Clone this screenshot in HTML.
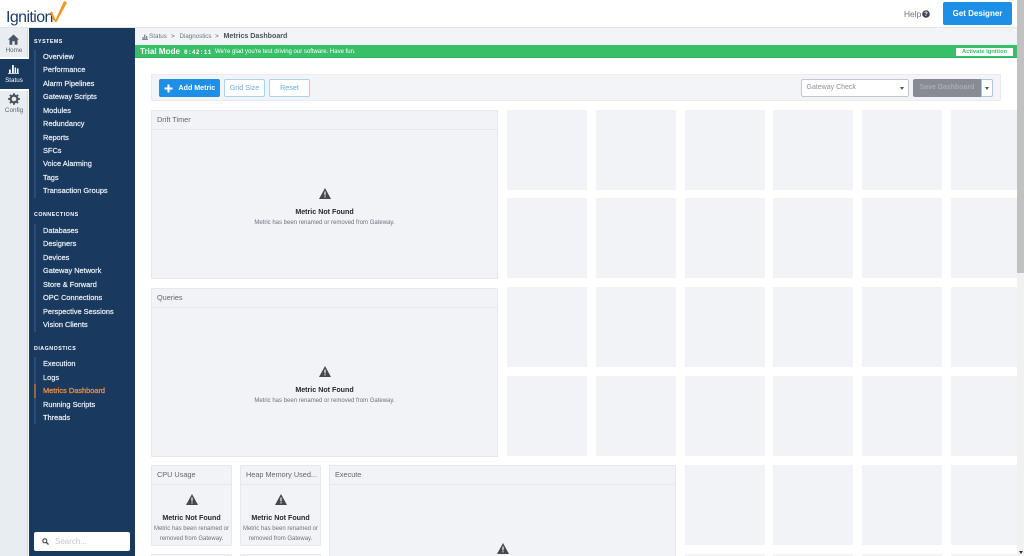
<!DOCTYPE html>
<html><head><meta charset="utf-8"><title>Metrics Dashboard</title>
<style>
html,body{margin:0;padding:0;width:1024px;height:556px;overflow:hidden;background:#fff;font-family:"Liberation Sans",sans-serif}
#w{position:relative;width:1024px;height:556px;overflow:hidden;background:#fff}
.a{position:absolute;white-space:nowrap}
.nav{position:absolute;left:43px;color:#eef2f6;font-size:7.4px;-webkit-text-stroke:.2px #eef2f6;line-height:10px;white-space:nowrap}
.sec{position:absolute;left:34px;color:#fff;font-size:5.3px;font-weight:bold;letter-spacing:.5px;line-height:8px}
.bar{position:absolute;left:34px;width:2px;background:#2c4c74}
.c{position:absolute;width:80px;height:80px;background:#f2f3f7;overflow:hidden}
.p{position:absolute;background:#f2f3f7;border:1px solid #e6e8ee;box-sizing:border-box;overflow:hidden;border-radius:1px}
.p .h{height:18px;border-bottom:1px solid #e6e8ee;color:#5f6672;font-size:7.3px;line-height:18px;padding-left:5px;white-space:nowrap}
.b{position:absolute;left:0;right:0;text-align:center}
.b svg{display:block;margin:0 auto}
.b b{display:block;color:#24272e;font-size:7.1px;line-height:9px;margin-top:9px}
.b span{display:block;color:#6d727c;font-size:6px;line-height:10px;margin-top:1px}
.btn{position:absolute;top:79px;height:18px;box-sizing:border-box;border-radius:2px;font-size:7.2px;line-height:16px;text-align:center;border:1px solid #a9d3f2;color:#6aaee0;background:#fff}
</style></head><body><div id="w">

<!-- header -->
<div class="a" style="left:0;top:0;width:1017px;height:28px;background:#fff;border-bottom:1px solid #e3e7ec;box-sizing:border-box"></div>
<div class="a" style="left:6px;top:7.500px;font-size:16px;line-height:20px;color:#1d3d66;letter-spacing:-.6px">Ignition</div>
<svg class="a" style="left:48px;top:0" width="20" height="24" viewBox="0 0 20 24"><path d="M2 12.500L4 11.500 7.500 20 6 21.500Z" fill="#f7941d"/><path d="M6.500 22L16 1 19 2.500 8.500 22Z" fill="#f7941d"/></svg>
<div class="a" style="left:904px;top:9px;font-size:8.400px;line-height:10px;color:#6b7078">Help</div>
<svg class="a" style="left:922px;top:9.500px" width="8" height="8" viewBox="0 0 8 8"><circle cx="4" cy="4" r="3.800" fill="#3e4550"/><text x="4" y="6.200" text-anchor="middle" font-size="6" font-weight="bold" fill="#fff" font-family="Liberation Sans">?</text></svg>
<div class="a" style="left:943px;top:2px;width:69px;height:23px;background:#1e8fe6;border-radius:2px;color:#fff;font-size:8px;font-weight:bold;line-height:23px;text-align:center">Get Designer</div>

<!-- rail -->
<div class="a" style="left:0;top:28px;width:28px;height:528px;background:#e8edf1;border-right:1px solid #d6dade;box-sizing:border-box"></div>
<div class="a" style="left:0;top:59px;width:29px;height:29.500px;background:#19395f"></div>
<div class="a" style="left:0;top:57px;width:28px;height:2px;background:#fff"></div>
<div class="a" style="left:0;top:88.500px;width:28px;height:2px;background:#fff"></div>
<svg class="a" style="left:8px;top:34px" width="11" height="11" viewBox="0 0 11 11"><path d="M5.500 .5L11 5.600H9.500V10.800H6.700V7.200H4.300V10.800H1.500V5.600H0Z" fill="#4a5462"/></svg>
<div class="a" style="left:0;top:47px;width:28px;text-align:center;font-size:6.300px;line-height:8px;color:#5c6470">Home</div>
<svg class="a" style="left:8px;top:63.500px" width="11" height="10" viewBox="0 0 11 10"><path d="M0 9.300H11V10H0ZM1 5.500H2.800V9H1ZM4 1H5.800V9H4ZM6.600 3.500H8.100V9H6.600ZM9 4.500H10.500V9H9Z" fill="#fff"/></svg>
<div class="a" style="left:0;top:77px;width:28px;text-align:center;font-size:6.300px;line-height:8px;color:#fff">Status</div>
<svg class="a" style="left:7.500px;top:93px" width="12" height="12" viewBox="0 0 12 12"><circle cx="6" cy="6" r="3.400" fill="none" stroke="#4a5462" stroke-width="2.200"/><path d="M6 .2V2.500M6 9.500V11.800M.2 6H2.500M9.500 6H11.800M1.900 1.900L3.500 3.500M8.500 8.500L10.100 10.100M10.100 1.900L8.500 3.500M3.500 8.500L1.900 10.100" stroke="#4a5462" stroke-width="1.900"/></svg>
<div class="a" style="left:0;top:107px;width:28px;text-align:center;font-size:6.300px;line-height:8px;color:#5c6470">Config</div>

<!-- sidebar -->
<div class="a" style="left:29px;top:28px;width:106px;height:528px;background:#19395f"></div>
<div class="sec" style="top:38px">SYSTEMS</div>
<div class="bar" style="top:50px;height:148px"></div>
<div class="nav" style="top:52px">Overview</div>
<div class="nav" style="top:65px">Performance</div>
<div class="nav" style="top:79px">Alarm Pipelines</div>
<div class="nav" style="top:92px">Gateway Scripts</div>
<div class="nav" style="top:106px">Modules</div>
<div class="nav" style="top:119px">Redundancy</div>
<div class="nav" style="top:133px">Reports</div>
<div class="nav" style="top:146px">SFCs</div>
<div class="nav" style="top:159px">Voice Alarming</div>
<div class="nav" style="top:173px">Tags</div>
<div class="nav" style="top:186px">Transaction Groups</div>
<div class="sec" style="top:211px">CONNECTIONS</div>
<div class="bar" style="top:224px;height:108px"></div>
<div class="nav" style="top:226px">Databases</div>
<div class="nav" style="top:239px">Designers</div>
<div class="nav" style="top:253px">Devices</div>
<div class="nav" style="top:266px">Gateway Network</div>
<div class="nav" style="top:280px">Store &amp; Forward</div>
<div class="nav" style="top:293px">OPC Connections</div>
<div class="nav" style="top:307px">Perspective Sessions</div>
<div class="nav" style="top:320px">Vision Clients</div>
<div class="sec" style="top:344.500px">DIAGNOSTICS</div>
<div class="bar" style="top:357px;height:67px"></div>
<div class="bar" style="top:384px;height:14px;background:#8c6a48"></div>
<div class="nav" style="top:359px">Execution</div>
<div class="nav" style="top:373px">Logs</div>
<div class="nav" style="top:386px;color:#f7913a;-webkit-text-stroke:.25px #f7913a">Metrics Dashboard</div>
<div class="nav" style="top:400px">Running Scripts</div>
<div class="nav" style="top:413px">Threads</div>
<div class="a" style="left:34px;top:532px;width:96px;height:19px;background:#fff;border-radius:2px"></div>
<svg class="a" style="left:42px;top:537.500px" width="7" height="7" viewBox="0 0 7 7"><circle cx="2.800" cy="2.800" r="2" fill="none" stroke="#444" stroke-width="1.100"/><path d="M4.300 4.300L6.500 6.500" stroke="#444" stroke-width="1.300"/></svg>
<div class="a" style="left:55px;top:536.500px;font-size:8px;line-height:10px;color:#c5c7cb">Search...</div>

<!-- breadcrumb -->
<div class="a" style="left:135px;top:28px;width:882px;height:17px;background:#f2f4f8"></div>
<svg class="a" style="left:142px;top:33.500px" width="6" height="6" viewBox="0 0 6 6"><path d="M0 5.300H6V6H0ZM.6 3H1.600V5H.6ZM2.300 .5H3.300V5H2.300ZM4.200 2H5.200V5H4.200Z" fill="#5f6672"/></svg>
<div class="a" style="left:149px;top:32px;font-size:6.300px;line-height:9px;color:#6d7480">Status</div>
<div class="a" style="left:171px;top:32px;font-size:6.500px;line-height:9px;color:#5f6672">&gt;</div>
<div class="a" style="left:179.500px;top:32px;font-size:6.200px;line-height:9px;color:#6d7480">Diagnostics</div>
<div class="a" style="left:215px;top:32px;font-size:6.500px;line-height:9px;color:#5f6672">&gt;</div>
<div class="a" style="left:223.500px;top:32px;font-size:7.100px;line-height:9px;font-weight:bold;color:#4a505b">Metrics Dashboard</div>

<!-- trial bar -->
<div class="a" style="left:135px;top:45px;width:882px;height:13px;background:#38bf68;border-bottom:1px solid #2fb35d;box-sizing:border-box"></div>
<div class="a" style="left:140px;top:47px;font-size:8.100px;line-height:10px;font-weight:bold;color:#fff">Trial Mode</div>
<div class="a" style="left:184px;top:47.500px;font-size:6px;line-height:9px;font-weight:bold;color:#fff;letter-spacing:.35px;font-family:'Liberation Mono',monospace">0:42:11</div>
<div class="a" style="left:215px;top:47.500px;font-size:6px;line-height:8px;color:#fff">We're glad you're test driving our software. Have fun.</div>
<div class="a" style="left:956px;top:48px;width:57px;height:8px;background:#fff;color:#38bf68;font-size:5.800px;line-height:8px;font-weight:bold;text-align:center">Activate Ignition</div>

<!-- toolbar -->
<div class="a" style="left:151px;top:74px;width:850px;height:27px;background:#f2f4f8;border:1px solid #e8ebf0;box-sizing:border-box;border-radius:1px"></div>
<div class="a" style="left:159px;top:79px;width:61px;height:18px;background:#1e8fe6;border-radius:2px"></div>
<svg class="a" style="left:164px;top:84px" width="9" height="9" viewBox="0 0 9 9"><path d="M3.500 .5H5.500V3.500H8.500V5.500H5.500V8.500H3.500V5.500H.5V3.500H3.500Z" fill="#fff"/></svg>
<div class="a" style="left:178.500px;top:83px;font-size:7.100px;line-height:10px;font-weight:bold;color:#fff">Add Metric</div>
<div class="btn" style="left:224px;width:41px">Grid Size</div>
<div class="btn" style="left:269px;width:41px">Reset</div>
<div class="a" style="left:801px;top:79px;width:108px;height:18px;box-sizing:border-box;background:#fff;border:1px solid #c3c6cc;border-radius:2px;color:#8d9199;font-size:7px;line-height:16px;padding-left:4.500px">Gateway Check</div>
<div class="a" style="left:900px;top:87px;width:0;height:0;border-left:2.500px solid transparent;border-right:2.500px solid transparent;border-top:3px solid #555"></div>
<div class="a" style="left:913px;top:79px;width:68px;height:18px;background:#888b94;border-radius:2px 0 0 2px;color:#a9acb3;font-size:7px;line-height:18px;font-weight:bold;text-align:center">Save Dashboard</div>
<div class="a" style="left:981px;top:79px;width:12px;height:18px;box-sizing:border-box;background:#fff;border:1px solid #a9c6e6;border-radius:0 2px 2px 0"></div>
<div class="a" style="left:984.500px;top:87px;width:0;height:0;border-left:2.500px solid transparent;border-right:2.500px solid transparent;border-top:3px solid #555"></div>

<!-- grid cells -->
<div class="c" style="left:507px;top:110px"></div><div class="c" style="left:596px;top:110px"></div><div class="c" style="left:685px;top:110px"></div><div class="c" style="left:773px;top:110px"></div><div class="c" style="left:862px;top:110px"></div><div class="c" style="left:951px;top:110px;width:66px"></div>
<div class="c" style="left:507px;top:198px"></div><div class="c" style="left:596px;top:198px"></div><div class="c" style="left:685px;top:198px"></div><div class="c" style="left:773px;top:198px"></div><div class="c" style="left:862px;top:198px"></div><div class="c" style="left:951px;top:198px;width:66px"></div>
<div class="c" style="left:507px;top:287px"></div><div class="c" style="left:596px;top:287px"></div><div class="c" style="left:685px;top:287px"></div><div class="c" style="left:773px;top:287px"></div><div class="c" style="left:862px;top:287px"></div><div class="c" style="left:951px;top:287px;width:66px"></div>
<div class="c" style="left:507px;top:376px"></div><div class="c" style="left:596px;top:376px"></div><div class="c" style="left:685px;top:376px"></div><div class="c" style="left:773px;top:376px"></div><div class="c" style="left:862px;top:376px"></div><div class="c" style="left:951px;top:376px;width:66px"></div>
<div class="c" style="left:685px;top:465px"></div><div class="c" style="left:773px;top:465px"></div><div class="c" style="left:862px;top:465px"></div><div class="c" style="left:951px;top:465px;width:66px"></div>
<div class="c" style="left:685px;top:554px;height:2px"></div><div class="c" style="left:773px;top:554px;height:2px"></div><div class="c" style="left:862px;top:554px;height:2px"></div><div class="c" style="left:951px;top:554px;height:2px;width:66px"></div>

<!-- panels -->
<div class="p" style="left:151px;top:110px;width:347px;height:169px"><div class="h">Drift Timer</div>
<div class="b" style="top:77px"><svg width="12" height="11" viewBox="0 0 12 11"><path d="M6 0L12 11H0Z" fill="#45484e"/><path d="M5.400 3.500H6.600V7.400H5.400ZM5.400 8.200H6.600V9.400H5.400Z" fill="#f2f3f7"/></svg><b>Metric Not Found</b><span>Metric has been renamed or removed from Gateway.</span></div></div>
<div class="p" style="left:151px;top:288px;width:347px;height:169px"><div class="h">Queries</div>
<div class="b" style="top:77px"><svg width="12" height="11" viewBox="0 0 12 11"><path d="M6 0L12 11H0Z" fill="#45484e"/><path d="M5.400 3.500H6.600V7.400H5.400ZM5.400 8.200H6.600V9.400H5.400Z" fill="#f2f3f7"/></svg><b>Metric Not Found</b><span>Metric has been renamed or removed from Gateway.</span></div></div>
<div class="p" style="left:151px;top:465px;width:81px;height:81px"><div class="h">CPU Usage</div>
<div class="b" style="top:28px"><svg width="12" height="11" viewBox="0 0 12 11"><path d="M6 0L12 11H0Z" fill="#45484e"/><path d="M5.400 3.500H6.600V7.400H5.400ZM5.400 8.200H6.600V9.400H5.400Z" fill="#f2f3f7"/></svg><b>Metric Not Found</b><span>Metric has been renamed or<br>removed from Gateway.</span></div></div>
<div class="p" style="left:240px;top:465px;width:81px;height:81px"><div class="h">Heap Memory Used...</div>
<div class="b" style="top:28px"><svg width="12" height="11" viewBox="0 0 12 11"><path d="M6 0L12 11H0Z" fill="#45484e"/><path d="M5.400 3.500H6.600V7.400H5.400ZM5.400 8.200H6.600V9.400H5.400Z" fill="#f2f3f7"/></svg><b>Metric Not Found</b><span>Metric has been renamed or<br>removed from Gateway.</span></div></div>
<div class="p" style="left:329px;top:465px;width:347px;height:100px"><div class="h">Execute</div>
<div class="b" style="top:77px"><svg width="12" height="11" viewBox="0 0 12 11"><path d="M6 0L12 11H0Z" fill="#45484e"/><path d="M5.400 3.500H6.600V7.400H5.400ZM5.400 8.200H6.600V9.400H5.400Z" fill="#f2f3f7"/></svg></div></div>
<div class="p" style="left:151px;top:554px;width:81px;height:10px"></div>
<div class="p" style="left:240px;top:554px;width:81px;height:10px"></div>

<!-- scrollbar -->
<div class="a" style="left:1017px;top:0;width:7px;height:556px;background:#f1f1f1"></div>
<div class="a" style="left:1017px;top:0;width:7px;height:273px;background:#c1c1c1"></div>
<div class="a" style="left:1018.500px;top:551px;width:0;height:0;border-left:2px solid transparent;border-right:2px solid transparent;border-top:3px solid #333"></div>
</div></body></html>
